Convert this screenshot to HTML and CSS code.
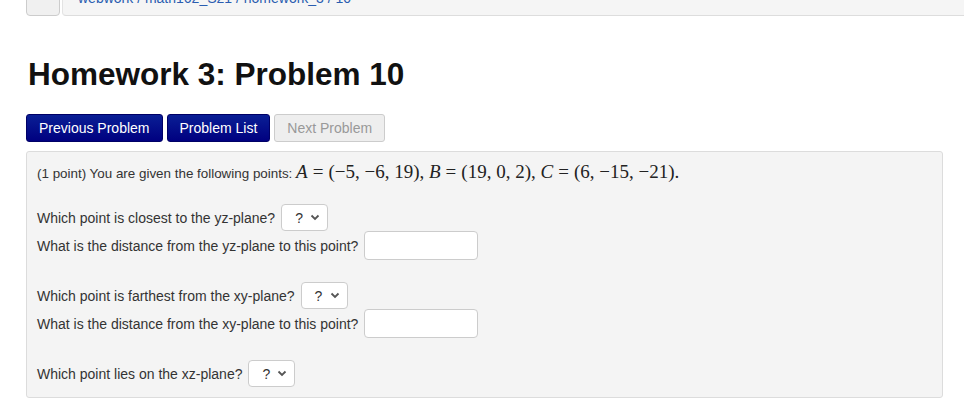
FILE: index.html
```html
<!DOCTYPE html>
<html>
<head>
<meta charset="utf-8">
<link rel="stylesheet" href="styles.css">
</head>
<body>
<div class="page">
  <div class="topbar">
    <div class="back"><svg width="8" height="10" viewBox="0 0 8 10"><path d="M6 1 L2 5 L6 9" fill="none" stroke="#333" stroke-width="2"/></svg></div>
    <div class="crumbs">webwork / math162_S21 / homework_3 / 10</div>
  </div>

  <h1 class="title">Homework 3: Problem 10</h1>

  <div class="nav">
    <span class="btn">Previous Problem</span>
    <span class="btn">Problem List</span>
    <span class="btn disabled">Next Problem</span>
  </div>

  <div class="problem">
    <p class="intro">(1 point) You are given the following points: <span class="math"><i>A</i><span class="eq">=</span>(−5, −6, 19), <i>B</i><span class="eq">=</span>(19, 0, 2), <i>C</i><span class="eq">=</span>(6, −15, −21).</span></p>

    <div class="group">
      <div class="row">Which point is closest to the yz-plane? <span class="sel"><span class="q">?</span><svg width="10" height="7" viewBox="0 0 10 7"><path d="M1.5 1.5 L5 5 L8.5 1.5" fill="none" stroke="#555" stroke-width="1.8"/></svg></span></div>
      <div class="row">What is the distance from the yz-plane to this point? <span class="inp"></span></div>
    </div>

    <div class="group">
      <div class="row">Which point is farthest from the xy-plane? <span class="sel"><span class="q">?</span><svg width="10" height="7" viewBox="0 0 10 7"><path d="M1.5 1.5 L5 5 L8.5 1.5" fill="none" stroke="#555" stroke-width="1.8"/></svg></span></div>
      <div class="row">What is the distance from the xy-plane to this point? <span class="inp"></span></div>
    </div>

    <div class="group">
      <div class="row">Which point lies on the xz-plane? <span class="sel"><span class="q">?</span><svg width="10" height="7" viewBox="0 0 10 7"><path d="M1.5 1.5 L5 5 L8.5 1.5" fill="none" stroke="#555" stroke-width="1.8"/></svg></span></div>
    </div>
  </div>
</div>
</body>
</html>
```

FILE: styles.css
```css
html, body { margin: 0; padding: 0; background: #fff; }
body { font-family: "Liberation Sans", Arial, sans-serif; color: #333; font-size: 14px; }
.page { padding: 0 21px 0 26px; }

.topbar { display: flex; height: 36px; margin-top: -20px; margin-right: -21px; }
.back { width: 34px; border: 1px solid #ccc; border-radius: 0 0 4px 4px; background: #f0f0f0; display: flex; align-items: flex-end; justify-content: center; padding-bottom: 18px; box-sizing: border-box; }
.crumbs { flex: 1; margin-left: 2px; background: #f5f5f5; border-bottom: 1px solid #ddd; border-left: 1px solid #e3e3e3; border-radius: 0 0 0 4px; padding: 9px 0 0 15px; box-sizing: border-box; font-size: 14px; color: #2a5db0; line-height: 18px; white-space: nowrap; }

.title { font-size: 31.5px; font-weight: bold; color: #111; margin: 40px 0 0 2px; line-height: 36px; }

.nav { display: flex; gap: 4px; margin-top: 22px; }
.btn { display: inline-block; height: 28px; line-height: 26px; box-sizing: border-box; padding: 0 12px; border-radius: 3px; color: #fff; font-size: 14px; background: linear-gradient(#0a1f95, #000080); border: 1px solid #000066; }
.btn.disabled { background: #eee; color: #999; border: 1px solid #ccc; }

.problem { margin-top: 9px; background: #f4f4f4; border: 1px solid #dcdcdc; border-radius: 3px; padding: 9px 10px 10px 10px; height: 247px; box-sizing: border-box; }
.intro { margin: 0; line-height: 22px; font-size: 13.4px; }
.math { font-family: "Liberation Serif", "Times New Roman", serif; font-size: 19px; color: #222; }
.math i { font-style: italic; }
.eq { margin: 0 5px; }

.group { margin-top: 19px; display: flex; flex-direction: column; gap: 1px; }
.group + .group { margin-top: 23px; }
.row { display: flex; align-items: center; gap: 6px; height: 27px; }
.sel { display: inline-flex; align-items: center; justify-content: space-between; width: 47px; height: 27px; box-sizing: border-box; border: 1px solid #ccc; border-radius: 4px; background: #fff; padding: 0 7px 0 13px; font-size: 14px; color: #333; }
.inp { display: inline-block; width: 114px; height: 29px; box-sizing: border-box; border: 1px solid #ccc; border-radius: 4px; background: #fff; }
```
